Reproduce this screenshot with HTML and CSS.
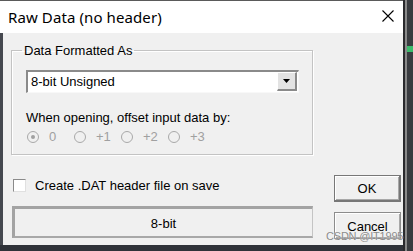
FILE: index.html
```html
<!DOCTYPE html>
<html>
<head>
<meta charset="utf-8">
<link rel="stylesheet" href="styles.css">
</head>
<body>
<div class="screen">
  <div class="window">
    <div class="titlebar">
      <span class="title">Raw Data (no header)</span>
      <svg class="close" width="12" height="12" viewBox="0 0 12 12"><path d="M0.5 0.5 L11.5 11.5 M11.5 0.5 L0.5 11.5" stroke="#000" stroke-width="1.1" fill="none"/></svg>
    </div>
    <div class="client">
      <div class="left">
        <fieldset class="group">
          <legend class="legend">Data Formatted As</legend>
          <div class="combo">
            <span class="combo-text">8-bit Unsigned</span>
            <span class="combo-btn"><svg width="7" height="4" viewBox="0 0 7 4"><path d="M0 0 H7 L3.5 4 Z" fill="#000"/></svg></span>
          </div>
          <div class="offset-label">When opening, offset input data by:</div>
          <div class="radios">
            <span class="radio"><svg width="12" height="12" viewBox="0 0 12 12"><circle cx="6" cy="6" r="5.5" fill="#f0f0f0" stroke="#a8a8a8"/><circle cx="6" cy="6" r="2" fill="#a0a0a0"/></svg><span>0</span></span>
            <span class="radio"><svg width="12" height="12" viewBox="0 0 12 12"><circle cx="6" cy="6" r="5.5" fill="#f0f0f0" stroke="#a8a8a8"/></svg><span>+1</span></span>
            <span class="radio"><svg width="12" height="12" viewBox="0 0 12 12"><circle cx="6" cy="6" r="5.5" fill="#f0f0f0" stroke="#a8a8a8"/></svg><span>+2</span></span>
            <span class="radio"><svg width="12" height="12" viewBox="0 0 12 12"><circle cx="6" cy="6" r="5.5" fill="#f0f0f0" stroke="#a8a8a8"/></svg><span>+3</span></span>
          </div>
        </fieldset>
        <div class="check-row">
          <span class="checkbox"></span>
          <span>Create .DAT header file on save</span>
        </div>
        <div class="status">8-bit</div>
      </div>
      <div class="right">
        <div class="btn btn-default">OK</div>
        <div class="btn">Cancel</div>
      </div>
    </div>
  </div>
  <div class="side">
    <div class="side-top"></div>
    <div class="side-green"></div>
    <div class="side-rest"></div>
  </div>
</div>
<div class="watermark">CSDN @IT1995</div>
</body>
</html>
```
FILE: styles.css
```css
html, body {
  margin: 0;
  padding: 0;
}
body {
  width: 413px;
  height: 251px;
  overflow: hidden;
  background: #2f3239;
  font-family: "Liberation Sans", Arial, sans-serif;
  font-size: 13px;
  color: #000;
  position: relative;
}
.screen {
  display: flex;
  align-items: flex-start;
}
.window {
  width: 403px;
  height: 244px;
  background: #f0f0f0;
  border-top: 1px solid #5a5a5a;
  display: flex;
  flex-direction: column;
  flex: none;
}
.titlebar {
  height: 32px;
  background: #fff;
  display: flex;
  align-items: center;
  justify-content: space-between;
  padding: 0 9px 0 8px;
  flex: none;
}
.title {
  font-family: "Noto Sans", "Open Sans", sans-serif;
  font-size: 15px;
  letter-spacing: 0.1px;
  color: #000;
  margin-top: -1px;
}
.close {
  display: block;
  margin-top: -2px;
}
.client {
  flex: 1;
  display: flex;
  border-left: 3px solid #45484f;
  padding: 10px 0 0 8px;
}
.left {
  width: 302px;
  display: flex;
  flex-direction: column;
}
.group {
  margin: 0;
  padding: 0 13px 11px 14px;
  border: 1px solid #c3c3c3;
  box-shadow: inset 1px 1px 0 #fff, 1px 1px 0 #fff;
  min-width: 0;
}
.legend {
  margin-left: -4px;
  padding: 0 2px;
  line-height: 15px;
}
.combo {
  margin-top: 12px;
  height: 23px;
  box-sizing: border-box;
  background: #fff;
  border-top: 2px solid #8a8a8a;
  border-left: 2px solid #8a8a8a;
  border-bottom: 1px solid #f8f8f8;
  border-right: 1px solid #f8f8f8;
  display: flex;
  align-items: stretch;
}
.combo-text {
  flex: 1;
  padding-left: 3px;
  line-height: 20px;
}
.combo-btn {
  width: 20px;
  margin: 0 1px 1px 0;
  box-sizing: border-box;
  background: #e3e3e3;
  border-top: 1px solid #fff;
  border-left: 1px solid #fff;
  border-right: 2px solid #8a8a8a;
  border-bottom: 2px solid #8a8a8a;
  display: flex;
  align-items: center;
  justify-content: center;
}
.combo-btn svg {
  display: block;
}
.offset-label {
  margin-top: 17px;
  line-height: 15px;
}
.radios {
  margin-top: 5px;
  display: flex;
  color: #a0a0a0;
  height: 13px;
  padding-left: 1px;
}
.radio {
  width: 47px;
  display: flex;
  align-items: center;
  gap: 10px;
  line-height: 13px;
}
.radio svg {
  display: block;
  flex: none;
}
.check-row {
  margin-top: 23px;
  display: flex;
  align-items: center;
  gap: 9px;
  line-height: 15px;
  padding-left: 2px;
}
.checkbox {
  width: 13px;
  height: 13px;
  box-sizing: border-box;
  background: #fff;
  border-top: 1px solid #8a8a8a;
  border-left: 1px solid #8a8a8a;
  border-right: 1px solid #e0e0e0;
  border-bottom: 1px solid #e0e0e0;
}
.status {
  margin-top: 13px;
  margin-left: 1px;
  height: 32px;
  box-sizing: border-box;
  border-top: 3px solid #a3a3a3;
  border-left: 3px solid #a3a3a3;
  border-bottom: 2px solid #a8a8a8;
  border-right: 1px solid #c4c4c4;
  display: flex;
  align-items: center;
  justify-content: center;
  padding-top: 1px;
}
.right {
  margin-left: 21px;
  padding-top: 132px;
  display: flex;
  flex-direction: column;
  gap: 10px;
}
.btn {
  width: 67px;
  height: 27px;
  box-sizing: border-box;
  background: #f0f0f0;
  border: 1px solid #8c8c8c;
  box-shadow: inset 1px 1px 0 #fff, inset -1px -1px 0 #a8a8a8;
  display: flex;
  align-items: center;
  justify-content: center;
  padding-top: 1px;
}
.btn-default {
  border-color: #777;
  border-width: 1px 2px 2px 1px;
}
.side {
  width: 10px;
  height: 251px;
  display: flex;
  flex-direction: column;
  border-left: 2px solid #2a2a2d;
  box-sizing: border-box;
  background: linear-gradient(to right, #8a8a8a 0 2px, #3a3c40 2px);
}
.side-top {
  height: 46px;
}
.side-green {
  height: 6px;
  background: linear-gradient(to right, #8a8a8a 0 2px, #3dbb6c 2px);
}
.side-rest {
  flex: 1;
}
.watermark {
  position: absolute;
  left: 326px;
  top: 230px;
  font-size: 11px;
  letter-spacing: -0.2px;
  color: #8a8a8a;
  line-height: 13px;
  text-shadow: 0 0 1px #fff;
}
```
